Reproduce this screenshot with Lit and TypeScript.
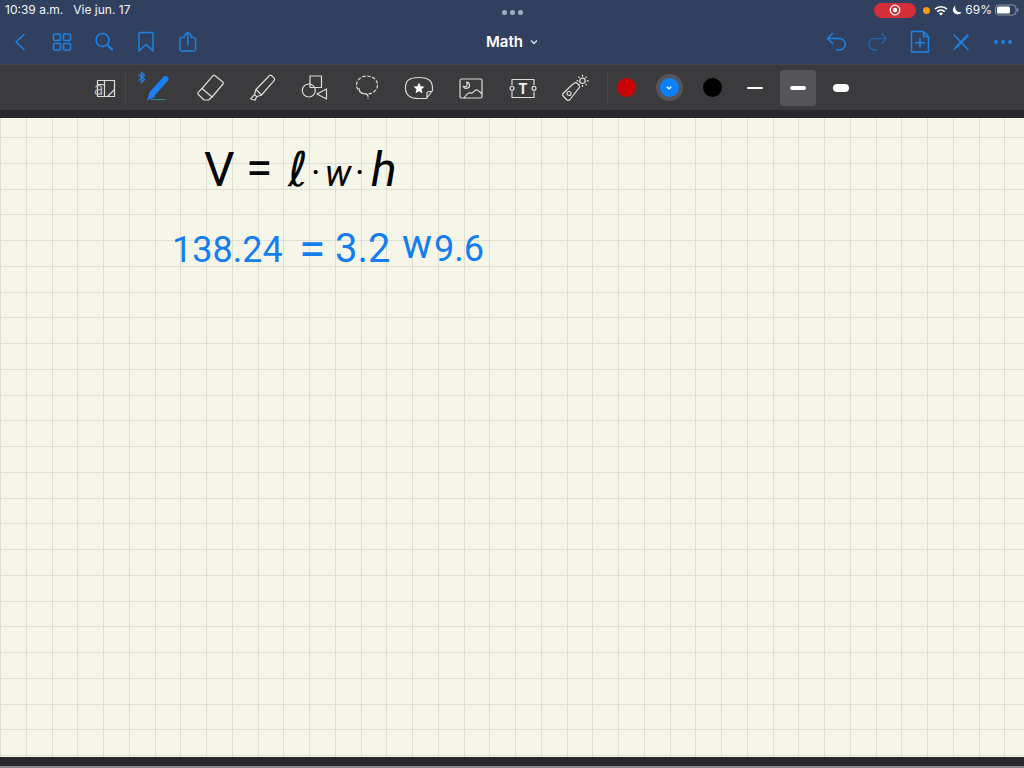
import { LitElement, html, svg, css } from "lit";
import { customElement, property, state } from "lit/decorators.js";
import { classMap } from "lit/directives/class-map.js";

const star = "M16 10.6l1.6 3.6 3.9.4-2.9 2.7.8 3.9-3.4-2-3.4 2 .8-3.9-2.9-2.7 3.9-.4z";

const icons: Record<string, unknown> = {
  back: svg`<path class="nav" d="M20 8.5L12 16l8 7.500"/>`,
  grid: svg`<g class="nav"><rect x="7.500" y="8" width="7" height="6.500" rx="1"/><rect x="17.500" y="8" width="7" height="6.500" rx="1"/><rect x="7.500" y="17.500" width="7" height="6.500" rx="1"/><rect x="17.500" y="17.500" width="7" height="6.500" rx="1"/></g>`,
  search: svg`<g class="nav"><circle cx="14.500" cy="14" r="6.500"/><path d="M19.300 18.800l4.700 4.700" stroke-width="2.200"/></g>`,
  bookmark: svg`<path class="nav" d="M9 8a1.500 1.500 0 0 1 1.500-1.500h11A1.500 1.500 0 0 1 23 8v17l-7-6.500L9 25z"/>`,
  share: svg`<g class="nav"><path d="M12.500 11.500h-3a1.500 1.500 0 0 0-1.500 1.500v10.500A1.500 1.500 0 0 0 9.500 25h12.500a1.500 1.500 0 0 0 1.500-1.500V13a1.500 1.500 0 0 0-1.500-1.500h-3"/><path d="M15.800 19V6.500M12 10l3.800-3.700L19.600 10"/></g>`,
  undo: svg`<path class="nav" d="M12.500 7.500L7.500 12.500l5 5M8 12.500h11.500a5.500 5.500 0 0 1 0 11.500h-3"/>`,
  redo: svg`<path class="nav" d="M19.500 7.500l5 5-5 5M24 12.500H12.500a5.500 5.500 0 0 0 0 11.500h2.500"/>`,
  addPage: svg`<g class="nav"><path d="M7.500 5.500h12l5 5v15.500h-17zM19.500 5.500v5h5"/><path d="M16 12.500v8.500M11.700 16.800h8.600"/></g>`,
  pencilOff: svg`<g class="nav"><path d="M8 9l14 14.500"/><path d="M21.500 9.500L10.500 21" stroke-width="2.500"/><path d="M10 21.500l-2 2"/></g>`,
  more: svg`<g class="navfill"><circle cx="8" cy="16" r="1.900"/><circle cx="15" cy="16" r="1.900"/><circle cx="22" cy="16" r="1.900"/></g>`,
  scan: svg`<g class="tool"><rect x="7.500" y="8.500" width="17" height="16"/><path d="M14.500 8.500v16M24.500 17.500l-7 7M8 12.500h4.500a2 2 0 0 1 2 2"/></g><text class="glyph" x="4" y="23">a</text>`,
  pen: svg`<path d="M8 27.500h15" stroke="#1d8f8c" stroke-width="1"/><path d="M22.500 7L9 22" stroke="#1a7ff2" stroke-width="6" stroke-linecap="round"/><path d="M4 28.500l3-8.500 5 5z" fill="#1a7ff2"/>`,
  eraser: svg`<g class="tool"><path d="M19.800 3.500l8 6.500a1.500 1.500 0 0 1 .2 2L17 25l-10-8.500L18 3.600a1.400 1.400 0 0 1 1.800-.1z"/><path d="M7 16.500L3.200 20.300a1.500 1.500 0 0 0 .2 2.200L9 28h4.500L17 25"/></g>`,
  marker: svg`<g class="tool"><path d="M9 17.500L22.500 3.500a1.500 1.500 0 0 1 2 0l2.800 2.900a1.500 1.500 0 0 1 0 2L14.500 23z"/><path d="M9 17.500l-1.500 5 2 2.200L14.500 23M7.500 22.500L3.500 26.800l4.500 1.500 1.700-3.500"/></g>`,
  shapes: svg`<g class="tool"><rect x="11" y="4" width="11.500" height="11.500"/><circle cx="9.800" cy="18.500" r="6.500"/><path d="M27.500 17v10l-9.500-5z" stroke-linejoin="round"/></g>`,
  lasso: svg`<g class="tool"><ellipse cx="16" cy="13" rx="10.500" ry="9" stroke-dasharray="3.500 1.600"/><path d="M8 16c0 4 2 5.500 5 5.500 4 0 4.500 3 4 5.500" stroke-dasharray="4 1.200"/></g>`,
  sticker: svg`<g class="tool"><path d="M29.500 18.500c.6-9-3-13-13.500-13S2.500 9 2.500 16 7 26.500 16 26.500h7.500zM29.500 19.500h-3.500a2 2 0 0 0-2 2v4.500"/></g><path fill="#fff" d="${star}"/>`,
  image: svg`<g class="tool"><rect x="5" y="7" width="22" height="19" rx="1.500"/><path d="M11.500 10.200c2 3-.2 5.200-3.300 4.200 1.500 3.200 7 2 6.300-1.600-.3-1.500-1.500-2.500-3-2.600zM9 26c1.500-2.500 2.500-4 4.500-5 1.500-.6 2.500.3 3.500 0 1.800-.7 2.500-3.200 4.300-3.200S25 20 27 22"/></g>`,
  text: svg`<g class="tool"><path d="M5 13V7.500h22V13M5 19.500v6h22v-6"/><circle cx="5" cy="16.300" r="2"/><circle cx="27" cy="16.300" r="2"/></g><text class="bold" x="16" y="22" text-anchor="middle">T</text>`,
  laser: svg`<g class="tool"><path d="M13.500 12.500l2-1.500a2 2 0 0 1 2.500.2l2 2a2 2 0 0 1 .2 2.500L11 27.500a2.500 2.500 0 0 1-3.500 0L4.500 24.500a2.500 2.500 0 0 1 0-3.500z"/><circle cx="10" cy="21.500" r="2"/><circle cx="23.500" cy="8.800" r="2.700"/><path d="M23.500 2.700v2M23.500 13v2M17.500 8.800h2M27.800 8.800h2M19.300 4.600l1.300 1.300M26.500 11.800l1.300 1.300M27.800 4.600l-1.300 1.300M19.300 13l1.200-1.200"/></g>`,
};

@customElement("app-icon")
export class AppIcon extends LitElement {
  @property() name = "";
  static styles = css`
    :host { display: block; width: 32px; height: 32px; }
    .icon { display: block; width: 32px; height: 32px; fill: none; }
    .nav { stroke: #1e82e3; stroke-width: 1.5; stroke-linecap: round; stroke-linejoin: round; }
    .navfill { fill: #1e82e3; }
    .tool { stroke: #dcdcdc; stroke-width: 1.2; stroke-linejoin: round; }
    .glyph { fill: #c4c4c6; font: 300 17px Inter, sans-serif; }
    .bold { fill: #f0f0f0; font: 700 14px Inter, sans-serif; }
  `;
  render() {
    return html`<svg class="icon" viewBox="0 0 32 32" aria-hidden="true">${icons[this.name]}</svg>`;
  }
}

@customElement("status-bar")
export class StatusBar extends LitElement {
  static styles = css`
    :host { display: grid; grid-template-columns: 1fr auto 1fr; align-items: center; height: 20px; padding: 0 5px;
      color: #f2f5fb; font: 12px/16px Inter, sans-serif; }
    .time { display: flex; gap: 10px; }
    .dots { display: flex; gap: 3px; padding-top: 4px; }
    .dot { width: 5px; height: 5px; border-radius: 50%; background: #a3aec8; }
    .right { display: flex; align-items: center; justify-content: flex-end; }
    .rec { display: flex; align-items: center; justify-content: center; width: 42px; height: 15px; margin-right: 7px;
      padding: 0; border: 0; border-radius: 8px; background: #d42f39; }
    .mic { width: 7px; height: 7px; margin-right: 4px; border-radius: 50%; background: #f59b12; }
    .wifi { margin-right: 4px; }
    .moon { margin-right: 3px; }
    .battery { margin-left: 3px; }
    svg { display: block; }
  `;
  render() {
    return html`
      <div class="time"><span>10:39 a.m.</span><span>Vie jun. 17</span></div>
      <div class="dots"><i class="dot"></i><i class="dot"></i><i class="dot"></i></div>
      <div class="right">
        <button class="rec" aria-label="Grabación de pantalla">
          <svg width="12" height="12" viewBox="0 0 12 12"><circle cx="6" cy="6" r="4.800" fill="none" stroke="#fff" stroke-width="1.200"/><circle cx="6" cy="6" r="2.200" fill="#fff"/></svg>
        </button>
        <span class="mic"></span>
        <svg class="wifi" width="14" height="11" viewBox="0 0 14 11"><g fill="none" stroke="#fff" stroke-width="1.700"><path d="M1 4.200a8.600 8.600 0 0 1 12 0M3.200 6.600a5.500 5.500 0 0 1 7.600 0"/></g><path fill="#fff" d="M7 10.600L4.900 8.500a3 3 0 0 1 4.200 0z"/></svg>
        <svg class="moon" width="10" height="10" viewBox="0 0 10 10"><path fill="#fff" d="M3.500.5A4.700 4.700 0 1 0 9.700 7 5 5 0 0 1 3.500.5z"/></svg>
        <span>69%</span>
        <svg class="battery" width="24" height="12" viewBox="0 0 24 12"><rect x=".5" y="1" width="20.500" height="10" rx="3" fill="none" stroke="#8b95ab"/><rect x="2" y="2.500" width="13" height="7" rx="1.500" fill="#fff"/><path d="M22.500 4.500v3" stroke="#8b95ab" stroke-width="1.500"/></svg>
      </div>`;
  }
}

@customElement("nav-bar")
export class NavBar extends LitElement {
  static styles = css`
    :host { display: grid; grid-template-columns: 1fr auto 1fr; align-items: center; height: 44px; }
    .group { display: flex; gap: 2px; }
    .end { justify-content: flex-end; }
    button { border: 0; padding: 0; background: none; color: inherit; cursor: pointer; }
    .action { display: grid; place-items: center; width: 40px; height: 40px; }
    .action:disabled { opacity: 0.5; }
    .title { display: flex; align-items: center; gap: 7px; color: #fff; font: 600 15px/20px Inter, sans-serif; }
  `;
  private action(name: string, label: string, disabled = false) {
    return html`<button class="action" aria-label=${label} ?disabled=${disabled}><app-icon name=${name}></app-icon></button>`;
  }
  render() {
    return html`
      <div class="group">
        ${this.action("back", "Atrás")}${this.action("grid", "Miniaturas")}${this.action("search", "Buscar")}
        ${this.action("bookmark", "Marcador")}${this.action("share", "Compartir")}
      </div>
      <button class="title">Math
        <svg width="8" height="6" viewBox="0 0 8 6"><path d="M1 1.500l3 3 3-3" fill="none" stroke="#dfe6f3" stroke-width="1.300"/></svg>
      </button>
      <div class="group end">
        ${this.action("undo", "Deshacer")}${this.action("redo", "Rehacer", true)}${this.action("addPage", "Añadir página")}
        ${this.action("pencilOff", "Solo lectura")}${this.action("more", "Más")}
      </div>`;
  }
}

const tools = [
  ["pen", "Pluma"], ["eraser", "Borrador"], ["marker", "Resaltador"], ["shapes", "Formas"], ["lasso", "Lazo"],
  ["sticker", "Elementos"], ["image", "Imagen"], ["text", "Texto"], ["laser", "Puntero láser"],
];
const inks = ["red", "blue", "black"];
const weights = ["thin", "medium", "thick"];

@customElement("tool-bar")
export class ToolBar extends LitElement {
  @state() private ink = "blue";
  @state() private weight = "medium";
  static styles = css`
    :host { display: flex; align-items: center; height: 45px; padding-left: 86px; background: #3b3b3d;
      border-top: 1px solid #45454c; border-bottom: 8px solid #29282c; }
    button { display: grid; place-items: center; flex: none; height: 36px; padding: 0; border: 0; background: none; cursor: pointer; }
    .scan { width: 39px; }
    .rule { flex: none; width: 1px; height: 34px; background: #48484a; }
    .tools { display: flex; margin: 0 6px 0 7px; }
    .tool { position: relative; width: 52px; }
    .bluetooth { position: absolute; left: 4px; top: 1px; }
    .styles { display: flex; gap: 7px; }
    .style { width: 36px; border-radius: 4px; }
    .swatch { display: grid; place-items: center; width: 19px; height: 19px; border-radius: 50%; }
    .chosen .swatch { border: 4px solid #55565b; }
    .red { background: #c80404; }
    .blue { background: #0c80fb; }
    .black { background: #000; }
    .current { background: #545459; }
    .line { width: 16px; border-radius: 4px; background: #fff; }
    .thin { height: 2px; }
    .medium { height: 4px; }
    .thick { height: 8px; }
  `;
  render() {
    return html`
      <button class="scan" aria-label="Ventana de zoom"><app-icon name="scan"></app-icon></button>
      <span class="rule"></span>
      <div class="tools">
        ${tools.map(([name, label]) => html`<button class="tool" aria-label=${label}>
          <app-icon name=${name}></app-icon>
          ${name === "pen" ? html`<svg class="bluetooth" width="9" height="13" viewBox="0 0 9 13"><path d="M1.500 3.500l6 5-3 3V1.500l3 3-6 5" fill="none" stroke="#1a7ff2" stroke-width="1.400"/></svg>` : ""}
        </button>`)}
      </div>
      <span class="rule"></span>
      <div class="styles">
        ${inks.map((name) => html`<button class=${classMap({ style: true, chosen: name === this.ink })} aria-label=${name} @click=${() => (this.ink = name)}>
          <span class="swatch ${name}">${name === this.ink ? html`<svg width="6" height="4" viewBox="0 0 6 4"><path d="M.7.7L3 2.800 5.300.7" fill="none" stroke="#fff" stroke-width="1.300"/></svg>` : ""}</span>
        </button>`)}
        ${weights.map((name) => html`<button class=${classMap({ style: true, current: name === this.weight })} aria-label=${name} @click=${() => (this.weight = name)}>
          <span class="line ${name}"></span>
        </button>`)}
      </div>`;
  }
}

const gridStops = [1, 27, 53, 78];

@customElement("note-page")
export class NotePage extends LitElement {
  static styles = css`
    :host { display: block; position: relative; min-height: 200px; background: #f6f6e8; overflow: hidden; }
    .sheet { position: absolute; inset: 0; display: block; width: 100%; height: 100%; }
    .rule { stroke: #dfdfd3; stroke-width: 1; }
    .ink { font: 36px Roboto, sans-serif; }
    .wide { font-size: 40px; }
    .large { font-size: 48px; }
    .slant { font-style: italic; }
    .script { font-family: "DejaVu Sans", sans-serif; }
    .dark { fill: #050505; }
    .azure { fill: #147df0; }
  `;
  render() {
    return html`<svg class="sheet">
      <defs>
        <pattern id="grid" width="103" height="103" patternUnits="userSpaceOnUse">
          ${gridStops.map((p) => svg`<path class="rule" d="M${p - 0.5} 0V103"/>`)}
          ${gridStops.map((p) => svg`<path class="rule" d="M0 ${p + 18.5}H103"/>`)}
        </pattern>
      </defs>
      <rect width="100%" height="100%" fill="url(#grid)"/>
      <g class="ink dark">
        <text class="large" x="204" y="68">V</text>
        <text class="large" x="246" y="66">=</text>
        <text class="large script" x="288" y="68">ℓ</text>
        <text x="311" y="67">·</text>
        <text class="slant" x="325" y="68">w</text>
        <text x="355" y="67">·</text>
        <text class="large slant" x="371" y="68">h</text>
      </g>
      <g class="ink azure">
        <text x="172" y="144">138.24</text>
        <text class="large" x="299" y="147">=</text>
        <text class="wide" x="335" y="144">3.2</text>
        <text class="wide" x="402" y="140">w</text>
        <text x="434" y="143">9.6</text>
      </g>
    </svg>`;
  }
}

@customElement("app-root")
export class AppRoot extends LitElement {
  static styles = css`
    :host { display: grid; grid-template-rows: auto auto 1fr auto; min-height: 100vh; background: #29282c; }
    .header { background: #31405f; }
    .footer { height: 9px; background: #29282c; border-bottom: 2px solid #8d8b8e; }
  `;
  render() {
    return html`
      <header class="header"><status-bar></status-bar><nav-bar></nav-bar></header>
      <tool-bar></tool-bar>
      <note-page></note-page>
      <footer class="footer"></footer>`;
  }
}
